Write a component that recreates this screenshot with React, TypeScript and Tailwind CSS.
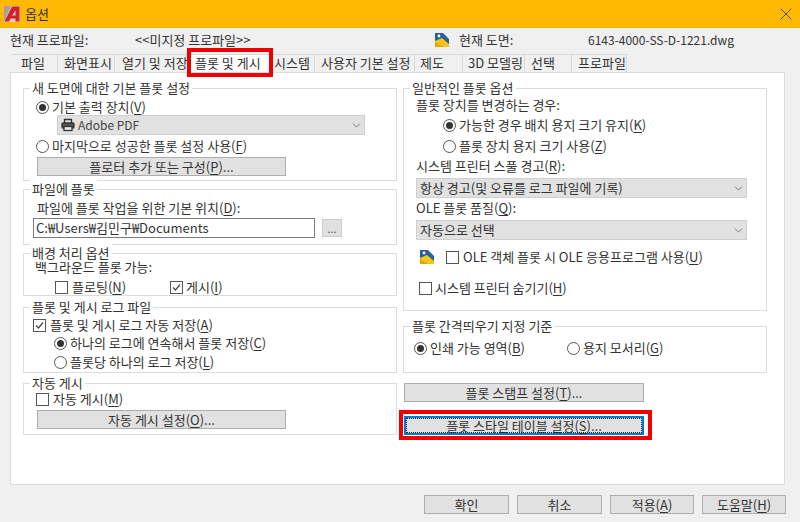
import React from 'react';
import { ChevronDown, X } from 'lucide-react';

function U({ children }: { children: React.ReactNode }) {
  return <span className="underline underline-offset-2">{children}</span>;
}

function AcadLogo() {
  return (
    <svg width="16" height="16" viewBox="0 0 16 16">
      <rect width="16" height="16" fill="#e6cdb8" />
      <path d="M0 16 V0 H7 Z" fill="#a9a09a" />
      <path d="M0.5 15.5 L8 0.5 H15.5 V15.5 H11.5 V12.5 H6.5 L5 15.5 Z" fill="#d2202c" />
      <path d="M8 9.5 L11.5 4.5 V9.5 Z" fill="#f4c9c4" />
    </svg>
  );
}

function DrawingIcon() {
  return (
    <svg width="16" height="16" viewBox="0 0 16 16">
      <path d="M1 1 H9 L15 7 V15 H1 Z" fill="#27609c" />
      <path d="M1 9 L8 6 L15 12 V15 H1 Z" fill="#f5c518" />
      <path d="M1 15 V10 L9 15 Z" fill="#e0a800" />
      <circle cx="5" cy="4" r="1.4" fill="#ffffff" />
    </svg>
  );
}

function PrinterIcon() {
  return (
    <svg width="14" height="14" viewBox="0 0 14 14" fill="none" stroke="#333" strokeWidth="1.3">
      <path d="M3.5 5 V1.5 H10.5 V5" />
      <rect x="1" y="5" width="12" height="5" rx="1" fill="#555" />
      <rect x="3" y="8.5" width="8" height="4" fill="#eee" />
    </svg>
  );
}

function Radio({ checked }: { checked?: boolean }) {
  return (
    <span className="w-[13px] h-[13px] rounded-full border border-[#555] bg-white flex items-center justify-center shrink-0">
      {checked && <span className="w-[7px] h-[7px] rounded-full bg-[#333]" />}
    </span>
  );
}

function Check({ checked }: { checked?: boolean }) {
  return (
    <span className="w-[13px] h-[13px] border border-[#555] bg-white flex items-center justify-center shrink-0">
      {checked && (
        <svg width="11" height="11" viewBox="0 0 11 11" fill="none" stroke="#444" strokeWidth="1.2">
          <path d="M2 5.5 L4.5 8 L9 2.5" />
        </svg>
      )}
    </span>
  );
}

function Group({ title, className, children }: { title: string; className: string; children: React.ReactNode }) {
  return (
    <div className={`relative border border-[#dcdcdc] ${className}`}>
      <span className="absolute left-[6px] -top-[10px] bg-white px-[2px] leading-[18px] whitespace-nowrap">{title}</span>
      {children}
    </div>
  );
}

function Btn({ className, children }: { className: string; children: React.ReactNode }) {
  return (
    <div className={`h-[19px] bg-[#e1e1e1] border border-[#adadad] flex items-center justify-center whitespace-nowrap ${className}`}>
      {children}
    </div>
  );
}

function Select({ className, children }: { className: string; children: React.ReactNode }) {
  return (
    <div className={`h-[20px] bg-[#e1e1e1] border border-[#d0d0d0] flex items-center justify-between pl-[3px] pr-[1px] whitespace-nowrap ${className}`}>
      <span className="flex items-center gap-[3px]">{children}</span>
      <ChevronDown size={13} strokeWidth={1.5} color="#666" />
    </div>
  );
}

const tabs = [
  { label: '파일', w: 'w-[46px] pl-[9px]' },
  { label: '화면표시', w: 'w-[57px] pl-[6px]' },
  { label: '열기 및 저장', w: 'w-[75px] pl-[7px]' },
  { label: '플롯 및 게시', w: 'w-[83px] pl-[5px]', active: true },
  { label: '시스템', w: 'w-[42px] pl-[1px]' },
  { label: '사용자 기본 설정', w: 'w-[100px] pl-[6px]' },
  { label: '제도', w: 'w-[48px] pl-[5px]' },
  { label: '3D 모델링', w: 'w-[62px] pl-[5px]' },
  { label: '선택', w: 'w-[47px] pl-[6px]' },
  { label: '프로파일', w: 'w-[55px] pl-[6px]' },
];

export default function App() {
  return (
    <div className="w-[800px] h-[522px] bg-[#f0f0f0] overflow-hidden flex flex-col text-[13px] leading-[18px] text-[#333] font-['Noto_Sans_CJK_KR','Noto_Sans',sans-serif]">
      <div className="h-[28px] bg-[#ffb900] flex items-center pl-[4px] pr-[4px] shrink-0">
        <AcadLogo />
        <span className="ml-[5px]">옵션</span>
        <X size={20} strokeWidth={1} color="#333" className="ml-auto" />
      </div>

      <div className="h-[26px] flex items-center pl-[10px] pb-[3px] shrink-0">
        <span className="w-[125px]">현재 프로파일:</span>
        <span className="w-[299px]">&lt;&lt;미지정 프로파일&gt;&gt;</span>
        <DrawingIcon />
        <span className="ml-[9px] w-[129px]">현재 도면:</span>
        <span className="text-[12px]">6143-4000-SS-D-1221.dwg</span>
      </div>

      <div className="h-[18px] flex pl-[12px] shrink-0">
        {tabs.map((t) => (
          <div
            key={t.label}
            className={`${t.w} relative flex items-center pb-[2px] whitespace-nowrap border-t border-r border-[#d9d9d9] ${t.active ? 'bg-white' : 'bg-[#f0f0f0]'}`}
          >
            {t.label}
            {t.active && <span className="absolute -left-[3px] -right-[1px] -top-[7px] -bottom-[5px] border-[4px] border-[#f00000]" />}
          </div>
        ))}
      </div>

      <div className="ml-[10px] w-[775px] h-[413px] bg-white border border-[#dcdcdc] pl-[12px] pt-[15px] flex gap-[6px] shrink-0">
        <div className="w-[374px] flex flex-col">
          <Group title="새 도면에 대한 기본 플롯 설정" className="h-[93px] pl-[12px] pt-[9px]">
            <div className="flex items-center gap-[3px]">
              <Radio checked />
              <span>기본 출력 장치(<U>V</U>)</span>
            </div>
            <Select className="w-[308px] ml-[21px] -mt-[1px]">
              <PrinterIcon />
              <span className="text-[12px] text-[#444]">Adobe PDF</span>
            </Select>
            <div className="flex items-center gap-[3px] mt-[2px]">
              <Radio />
              <span>마지막으로 성공한 플롯 설정 사용(<U>F</U>)</span>
            </div>
            <Btn className="w-[249px] ml-[1px] mt-[2px]">
              플로터 추가 또는 구성(<U>P</U>)...
            </Btn>
          </Group>

          <Group title="파일에 플롯" className="h-[56px] mt-[8px] pl-[9px] pt-[9px]">
            <div className="ml-[4px]">파일에 플롯 작업을 위한 기본 위치(<U>D</U>):</div>
            <div className="flex items-center gap-[7px] mt-[1px]">
              <div className="w-[282px] h-[20px] bg-white border border-[#7a7a7a] flex items-center pl-[2px]">C:₩Users₩김민구₩Documents</div>
              <div className="w-[20px] h-[18px] bg-[#e1e1e1] border border-[#cfcfcf] flex items-center justify-center text-[11px] text-[#555]">...</div>
            </div>
          </Group>

          <Group title="배경 처리 옵션" className="h-[43px] mt-[8px] pl-[11px] pt-[4px]">
            <div>백그라운드 플롯 가능:</div>
            <div className="flex mt-[2px] ml-[20px]">
              <div className="w-[115px] flex items-center gap-[4px]">
                <Check />
                <span>플로팅(<U>N</U>)</span>
              </div>
              <div className="flex items-center gap-[3px]">
                <Check checked />
                <span>게시(<U>I</U>)</span>
              </div>
            </div>
          </Group>

          <Group title="플롯 및 게시 로그 파일" className="h-[66px] mt-[11px] pl-[9px] pt-[8px]">
            <div className="flex items-center gap-[4px]">
              <Check checked />
              <span>플롯 및 게시 로그 자동 저장(<U>A</U>)</span>
            </div>
            <div className="flex items-center gap-[3px] ml-[21px]">
              <Radio checked />
              <span>하나의 로그에 연속해서 플롯 저장(<U>C</U>)</span>
            </div>
            <div className="flex items-center gap-[3px] ml-[21px] mt-[1px]">
              <Radio />
              <span>플롯당 하나의 로그 저장(<U>L</U>)</span>
            </div>
          </Group>

          <Group title="자동 게시" className="h-[52px] mt-[10px] pl-[13px] pt-[6px]">
            <div className="flex items-center gap-[4px] -ml-[1px]">
              <Check />
              <span>자동 게시(<U>M</U>)</span>
            </div>
            <Btn className="w-[249px] mt-[2px]">
              자동 게시 설정(<U>O</U>)...
            </Btn>
          </Group>
        </div>

        <div className="w-[364px] flex flex-col">
          <Group title="일반적인 플롯 옵션" className="h-[223px] pl-[12px] pt-[7px]">
            <div>플롯 장치를 변경하는 경우:</div>
            <div className="flex items-center gap-[3px] ml-[27px] mt-[2px]">
              <Radio checked />
              <span>가능한 경우 배치 용지 크기 유지(<U>K</U>)</span>
            </div>
            <div className="flex items-center gap-[3px] ml-[27px] mt-[3px]">
              <Radio />
              <span>플롯 장치 용지 크기 사용(<U>Z</U>)</span>
            </div>
            <div className="mt-[2px]">시스템 프린터 스풀 경고(<U>R</U>):</div>
            <Select className="w-[331px] mt-[3px]">항상 경고(및 오류를 로그 파일에 기록)</Select>
            <div className="mt-[1px]">OLE 플롯 품질(<U>Q</U>):</div>
            <Select className="w-[331px] mt-[3px]">자동으로 선택</Select>
            <div className="flex items-center mt-[8px] ml-[3px]">
              <DrawingIcon />
              <span className="ml-[11px] mr-[4px]">
                <Check />
              </span>
              <span>OLE 객체 플롯 시 OLE 응용프로그램 사용(<U>U</U>)</span>
            </div>
            <div className="flex items-center gap-[3px] mt-[13px] ml-[3px]">
              <Check />
              <span>시스템 프린터 숨기기(<U>H</U>)</span>
            </div>
          </Group>

          <Group title="플롯 간격띄우기 지정 기준" className="h-[47px] mt-[15px] pl-[10px] pt-[12px]">
            <div className="flex">
              <div className="w-[153px] flex items-center gap-[3px]">
                <Radio checked />
                <span>인쇄 가능 영역(<U>B</U>)</span>
              </div>
              <div className="flex items-center gap-[3px]">
                <Radio />
                <span>용지 모서리(<U>G</U>)</span>
              </div>
            </div>
          </Group>

          <Btn className="w-[240px] ml-[1px] mt-[10px]">
            플롯 스탬프 설정(<U>T</U>)...
          </Btn>

          <div className="relative w-[240px] h-[19px] ml-[1px] mt-[14px]">
            <div className="h-[19px] bg-[#e1e1e1] border-2 border-[#0078d7] flex items-center justify-center whitespace-nowrap outline-1 -outline-offset-3 outline-dotted outline-[#222]">
              플롯 스타일 테이블 설정(<U>S</U>)...
            </div>
            <span className="absolute -left-[5px] -right-[8px] -top-[6px] -bottom-[5px] border-[4px] border-[#f00000]" />
          </div>
        </div>
      </div>

      <div className="flex pl-[424px] pt-[10px] gap-[8px]">
        <Btn className="w-[85px]">확인</Btn>
        <Btn className="w-[85px]">취소</Btn>
        <Btn className="w-[84px]">
          적용(<U>A</U>)
        </Btn>
        <Btn className="w-[84px]">
          도움말(<U>H</U>)
        </Btn>
      </div>
    </div>
  );
}
